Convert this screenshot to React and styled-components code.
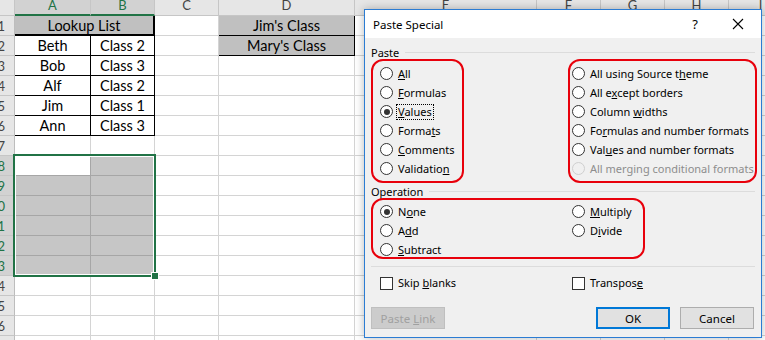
import React from 'react';
import styled, { createGlobalStyle } from 'styled-components';

const GlobalStyle = createGlobalStyle`
  html, body { margin: 0; padding: 0; background: #fff; overflow: hidden; }
`;

// --- Spreadsheet ---
const Page = styled.div`
  position: relative;
  width: 765px;
  height: 340px;
  overflow: hidden;
  background: #fff;
`;

const Sheet = styled.div`
  display: grid;
  grid-template-columns: 15px 76px 64px 64px 136px 182px 64px 64px 64px 64px;
  grid-template-rows: 16px repeat(17, 20px);
  font-family: Lato, 'Liberation Sans', sans-serif;
  font-size: 14.5px;
  color: #000;
`;

const ColHead = styled.div`
  box-sizing: border-box;
  background: ${p => (p.$active ? '#d2d2d2' : '#e6e6e6')};
  color: ${p => (p.$active ? '#217346' : '#444')};
  border-right: 1px solid #c6c6c6;
  border-bottom: ${p => (p.$active ? '2px solid #217346' : '1px solid #c6c6c6')};
  display: flex;
  justify-content: center;
  align-items: flex-start;
  line-height: 10px;
  font-size: 13px;
  overflow: hidden;
`;

const Corner = styled(ColHead)`
  background: #e6e6e6;
`;

const RowHead = styled.div`
  box-sizing: border-box;
  background: ${p => (p.$active ? '#d2d2d2' : '#e6e6e6')};
  color: ${p => (p.$active ? '#217346' : '#444')};
  border-right: 1px solid #bdbdbd;
  border-bottom: 1px solid #c6c6c6;
  display: flex;
  justify-content: flex-end;
  align-items: center;
  padding-right: 9px;
  overflow: hidden;
  white-space: nowrap;
  font-size: 13px;
`;

const Cell = styled.div`
  box-sizing: border-box;
  grid-column: span ${p => p.$span || 1};
  background: ${p => (p.$fill ? '#c0c0c0' : p.$sel ? '#c6c6c6' : '#fff')};
  border-right: ${p => p.$br || '1px solid #d4d4d4'};
  border-bottom: ${p => p.$bb || '1px solid #d4d4d4'};
  display: flex;
  align-items: center;
  justify-content: center;
  white-space: nowrap;
  overflow: hidden;
`;

const Selection = styled.div`
  position: absolute;
  left: 13px;
  top: 154px;
  width: 143px;
  height: 123px;
  box-sizing: border-box;
  border: 2px solid #217346;
  box-shadow: inset 0 0 0 1px #fff;
  pointer-events: none;
`;

const FillHandle = styled.div`
  position: absolute;
  right: -5px;
  bottom: -5px;
  width: 6px;
  height: 6px;
  background: #217346;
  border: 1px solid #fff;
`;

// --- Dialog ---
const Dialog = styled.div`
  position: absolute;
  left: 364px;
  top: 9px;
  width: 398px;
  height: 329px;
  box-sizing: border-box;
  border: 1px solid #2b7cd3;
  background: #f0f0f0;
  box-shadow: 0 0 9px rgba(0, 0, 0, 0.28);
  font-family: 'Noto Sans', 'Open Sans', sans-serif;
  font-size: 11px;
  color: #000;
  display: flex;
  flex-direction: column;
`;

const TitleBar = styled.div`
  height: 28px;
  background: #fff;
  display: flex;
  align-items: center;
  padding-left: 8px;
  font-size: 11.5px;
`;

const Title = styled.span`
  flex: 1;
`;

const HelpGlyph = styled.span`
  width: 14px;
  margin-right: 30px;
  text-align: center;
  font-size: 13px;
`;

const CloseGlyph = styled.svg`
  margin-right: 17px;
`;

const Body = styled.div`
  padding: 0 4px 0 6px;
  display: flex;
  flex-direction: column;
`;

const GroupLabel = styled.div`
  display: flex;
  align-items: center;
  gap: 6px;
  height: 13px;
  margin-top: ${p => p.$mt || 0}px;
  margin-right: 2px;

  &::after {
    content: '';
    flex: 1;
    height: 1px;
    background: #dcdcdc;
  }
`;

const PasteRow = styled.div`
  display: flex;
  gap: 104px;
`;

const Annot = styled.div`
  box-sizing: border-box;
  width: ${p => p.$w}px;
  height: ${p => p.$h}px;
  border: 2px solid #e8000b;
  border-radius: 12px;
  padding: ${p => p.$pad};
  display: grid;
  grid-template-columns: ${p => p.$cols || '1fr'};
  grid-template-rows: ${p => (p.$rows ? `repeat(${p.$rows}, 19px)` : 'none')};
  grid-auto-rows: 19px;
  grid-auto-flow: ${p => p.$flow || 'row'};
`;

const Option = styled.label`
  display: flex;
  align-items: center;
  gap: 4px;
  white-space: nowrap;
  color: ${p => (p.$disabled ? '#8d8d8d' : '#000')};
`;

const Radio = styled.span`
  position: relative;
  box-sizing: border-box;
  width: 13px;
  height: 13px;
  border-radius: 50%;
  border: 1px solid ${p => (p.$disabled ? '#cfcfcf' : '#333')};
  background: ${p => (p.$disabled ? '#f0f0f0' : '#fff')};
  flex-shrink: 0;

  &::after {
    content: '';
    display: ${p => (p.$checked ? 'block' : 'none')};
    position: absolute;
    left: 2.5px;
    top: 2.5px;
    width: 6px;
    height: 6px;
    border-radius: 50%;
    background: #333;
  }
`;

const Text = styled.span`
  outline: ${p => (p.$focus ? '1px dotted #000' : 'none')};
  outline-offset: 0;
  padding: 0 1px;
  line-height: 14px;
`;

const Divider = styled.div`
  height: 1px;
  background: #dcdcdc;
  margin: 7px 2px 0 0;
`;

const CheckRow = styled.div`
  display: grid;
  grid-template-columns: 192px 1fr;
  padding-left: 9px;
  margin-top: 8px;
  height: 16px;
`;

const Check = styled.span`
  box-sizing: border-box;
  width: 13px;
  height: 13px;
  border: 1px solid #333;
  background: #fff;
  flex-shrink: 0;
`;

const Buttons = styled.div`
  display: flex;
  margin-top: 16px;
  margin-right: 3px;
  gap: 10px;
`;

const Button = styled.div`
  box-sizing: border-box;
  width: 74px;
  height: 22px;
  display: flex;
  align-items: center;
  justify-content: center;
  background: ${p => (p.$disabled ? '#cccccc' : '#e1e1e1')};
  border: ${p => (p.$default ? '2px solid #0078d7' : p.$disabled ? '1px solid #bfbfbf' : '1px solid #adadad')};
  color: ${p => (p.$disabled ? '#a0a0a0' : '#000')};
  margin-right: ${p => (p.$push ? 'auto' : '0')};
  font-size: 11.5px;
`;

const Key = ({ text, k }) => {
  if (k == null) return text;
  return (
    <>
      {text.slice(0, k)}
      <u>{text[k]}</u>
      {text.slice(k + 1)}
    </>
  );
};

const RadioOption = ({ text, k, checked, disabled, focus }) => (
  <Option $disabled={disabled}>
    <Radio $checked={checked} $disabled={disabled} />
    <Text $focus={focus}>
      <Key text={text} k={k} />
    </Text>
  </Option>
);

const pasteLeft = [
  { text: 'All', k: 0 },
  { text: 'Formulas', k: 0 },
  { text: 'Values', k: 0, checked: true, focus: true },
  { text: 'Formats', k: 5 },
  { text: 'Comments', k: 0 },
  { text: 'Validation', k: 9 },
];

const pasteRight = [
  { text: 'All using Source theme', k: 18 },
  { text: 'All except borders', k: 5 },
  { text: 'Column widths', k: 7 },
  { text: 'Formulas and number formats', k: 2 },
  { text: 'Values and number formats', k: 3 },
  { text: 'All merging conditional formats', disabled: true },
];

const operations = [
  { text: 'None', k: 1, checked: true },
  { text: 'Add', k: 1 },
  { text: 'Subtract', k: 0 },
  { text: 'Multiply', k: 0 },
  { text: 'Divide', k: 1 },
];

const COLS = ['A', 'B', 'C', 'D', 'E', 'F', 'G', 'H', 'I'];

const tableRows = [
  ['Beth', 'Class 2'],
  ['Bob', 'Class 3'],
  ['Alf', 'Class 2'],
  ['Jim', 'Class 1'],
  ['Ann', 'Class 3'],
];

const BLACK = '1px solid #000';
const THICK = '2px solid #000';

const SheetRow = ({ n }) => {
  const active = n >= 8 && n <= 13;
  const cells = [];
  if (n === 1) {
    cells.push(
      <Cell key="AB" $span={2} $fill $bb={THICK} $br={THICK}>Lookup List</Cell>
    );
  } else if (n >= 2 && n <= 6) {
    const [name, cls] = tableRows[n - 2];
    cells.push(<Cell key="A" $bb={BLACK} $br={BLACK}>{name}</Cell>);
    cells.push(<Cell key="B" $bb={BLACK} $br={BLACK}>{cls}</Cell>);
  } else if (active) {
    const inner = '1px solid #a6a6a6';
    cells.push(<Cell key="A" $sel={n !== 8} $bb={inner} $br={inner} />);
    cells.push(<Cell key="B" $sel $bb={inner} $br={inner} />);
  } else {
    cells.push(<Cell key="A" />);
    cells.push(<Cell key="B" />);
  }
  cells.push(<Cell key="C" />);
  if (n === 1 || n === 2) {
    cells.push(
      <Cell key="D" $fill $bb={BLACK} $br={BLACK}>
        {n === 1 ? "Jim's Class" : "Mary's Class"}
      </Cell>
    );
  } else {
    cells.push(<Cell key="D" />);
  }
  COLS.slice(4).forEach(c => cells.push(<Cell key={c} />));
  return (
    <>
      <RowHead $active={active}>{n}</RowHead>
      {cells}
    </>
  );
};

const App = () => (
  <Page>
    <GlobalStyle />
    <Sheet>
      <Corner />
      {COLS.map(c => (
        <ColHead key={c} $active={c === 'A' || c === 'B'}>{c}</ColHead>
      ))}
      {Array.from({ length: 17 }, (_, i) => (
        <SheetRow key={i} n={i + 1} />
      ))}
    </Sheet>
    <Selection>
      <FillHandle />
    </Selection>

    <Dialog>
      <TitleBar>
        <Title>Paste Special</Title>
        <HelpGlyph>?</HelpGlyph>
        <CloseGlyph width="12" height="12" viewBox="0 0 12 12">
          <path d="M1 1 L11 11 M11 1 L1 11" stroke="#000" strokeWidth="1.1" fill="none" />
        </CloseGlyph>
      </TitleBar>
      <Body>
        <GroupLabel $mt={8}>Paste</GroupLabel>
        <PasteRow>
          <Annot $w={93} $h={124} $pad="3px 0 0 7px">
            {pasteLeft.map(o => <RadioOption key={o.text} {...o} />)}
          </Annot>
          <Annot $w={189} $h={124} $pad="3px 0 0 2px">
            {pasteRight.map(o => <RadioOption key={o.text} {...o} />)}
          </Annot>
        </PasteRow>
        <GroupLabel $mt={2}>Operation</GroupLabel>
        <Annot $w={274} $h={61} $pad="2px 0 0 7px" $cols="192px 1fr" $flow="column" $rows={3}>
          {operations.map(o => <RadioOption key={o.text} {...o} />)}
        </Annot>
        <Divider />
        <CheckRow>
          <Option>
            <Check />
            <Text><Key text="Skip blanks" k={5} /></Text>
          </Option>
          <Option>
            <Check />
            <Text><Key text="Transpose" k={8} /></Text>
          </Option>
        </CheckRow>
        <Buttons>
          <Button $disabled $push><span>Paste <u>L</u>ink</span></Button>
          <Button $default>OK</Button>
          <Button>Cancel</Button>
        </Buttons>
      </Body>
    </Dialog>
  </Page>
);

export default App;
